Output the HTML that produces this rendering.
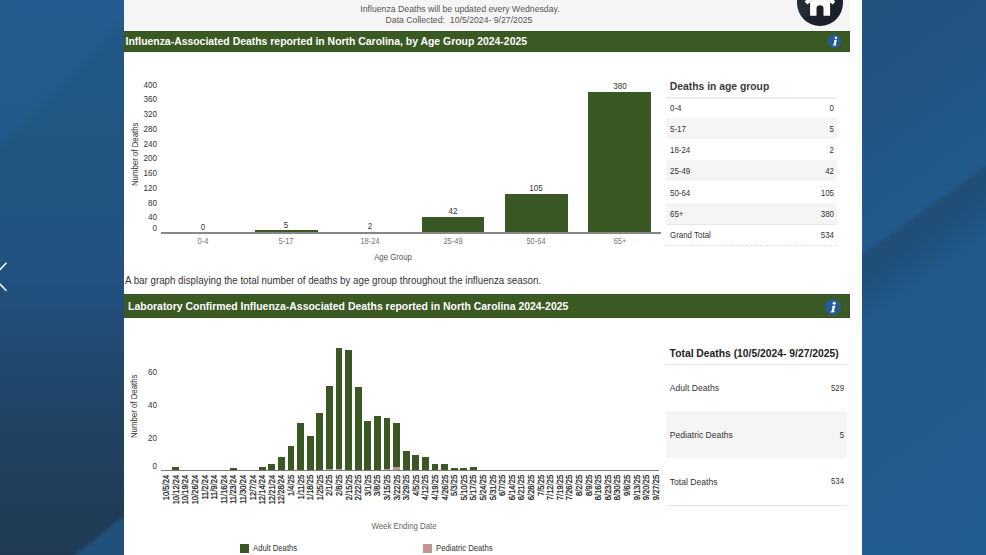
<!DOCTYPE html>
<html><head><meta charset="utf-8">
<style>
*{margin:0;padding:0;box-sizing:border-box}
html,body{width:986px;height:555px;overflow:hidden}
body{position:relative;font-family:"Liberation Sans", sans-serif;
background:#225380}
#bgl{position:absolute;left:0;top:0;width:124px;height:555px;background:linear-gradient(180deg,#22588a 0%,#21567f 25%,#225180 50%,#204466 73%,#203f5c 87%,#203a52 100%)}
#bgl2{position:absolute;left:0;top:0;width:124px;height:555px;background:linear-gradient(142deg,rgba(33,80,123,0) 93.6%,#21507b 94.6%),linear-gradient(134.5deg,rgba(40,100,160,0.25) 0%,rgba(40,100,160,0.3) 20%,rgba(40,100,160,0) 23%)}
#bgr{position:absolute;left:862px;top:0;width:124px;height:555px;background:linear-gradient(144.3deg,#21527d 0%,#225382 20%,#22578a 31%,#22598b 39%,#204e76 40.2%,#204f79 44%,#22598c 51%,#235c91 100%)}
.r{position:absolute}
.t{position:absolute;white-space:nowrap}
.dl{height:8.6px;text-align:right;font-size:8.6px;line-height:8.6px;color:#111;-webkit-text-stroke:0.25px #222;transform:rotate(-90deg) scaleX(0.88);transform-origin:center center}
</style></head><body>
<div id="bgl"></div><div id="bgl2"></div><div id="bgr"></div>
<div class="r" style="left:124.00px;top:0.00px;width:738.00px;height:555.00px;background:#fff;"></div>
<div class="r" style="left:124.00px;top:0.00px;width:726.00px;height:29.70px;background:#f5f5f5;"></div>
<div class="t" style="left:299.60px;top:5.35px;width:320px;text-align:center;font-size:9.1px;line-height:9.1px;color:#555;font-weight:normal;transform:scaleX(0.956);transform-origin:center center;">Influenza Deaths will be updated every Wednesday.</div>
<div class="t" style="left:299.40px;top:15.95px;width:320px;text-align:center;font-size:9.1px;line-height:9.1px;color:#555;font-weight:normal;transform:scaleX(0.956);transform-origin:center center;">Data Collected:&nbsp; 10/5/2024- 9/27/2025</div>
<div class="r" style="left:796.6px;top:-21.1px;width:46.8px;height:46.8px;border-radius:50%;background:linear-gradient(135deg,#272e3a 0%,#252b37 46%,#1b202a 54%,#1b202a 100%)"></div>
<svg class="r" style="left:796px;top:-10px" width="48" height="30" viewBox="0 0 48 30">
 <path d="M10 13 L24 1 L38 13" stroke="#fff" stroke-width="4.2" fill="none"/>
 <path d="M14.1 12 L24 4 L34.1 12 L34.1 25.8 L27.5 25.8 L27.5 18.6 Q27.5 15.3 24 15.3 Q20.5 15.3 20.5 18.6 L20.5 25.8 L14.1 25.8 Z" fill="#fff"/>
</svg>
<div class="r" style="left:124.00px;top:31.00px;width:726.00px;height:20.80px;background:#3a5923;box-sizing:border-box;border:1px solid #34531e;border-left:none"></div>
<div class="t" style="left:125.50px;top:36.89px;text-align:left;font-size:10.43px;line-height:10.43px;color:#fff;font-weight:bold;white-space:nowrap">Influenza-Associated Deaths reported in North Carolina, by Age Group 2024-2025</div>
<div class="r" style="left:827.60px;top:34.00px;width:13.8px;height:13.8px;border-radius:50%;background:#255c96"></div><svg class="r" style="left:827.60px;top:34.00px" width="13.8" height="13.8" viewBox="0 0 16 16"><circle cx="9.2" cy="4.3" r="1.45" fill="#fff"/><path d="M7.3 7.0 L10.4 6.6 L8.9 12.0 L9.6 12.0 L9.3 13.2 L5.4 13.4 L5.7 12.5 L6.4 12.4 L7.6 7.9 L7.0 8.0 Z" fill="#fff"/></svg>
<div class="t" style="left:183.14px;top:222.00px;width:40px;text-align:center;font-size:9.4px;line-height:9.4px;color:#333;font-weight:normal;transform:scaleX(0.86);transform-origin:center center;">0</div>
<div class="t" style="left:183.14px;top:236.70px;width:40px;text-align:center;font-size:8.6px;line-height:8.6px;color:#777;font-weight:normal;transform:scaleX(0.87);transform-origin:center center;">0-4</div>
<div class="r" style="left:255.08px;top:230.46px;width:62.70px;height:1.84px;background:#3a5823;"></div>
<div class="t" style="left:266.43px;top:220.15px;width:40px;text-align:center;font-size:9.4px;line-height:9.4px;color:#333;font-weight:normal;transform:scaleX(0.86);transform-origin:center center;">5</div>
<div class="t" style="left:266.43px;top:236.70px;width:40px;text-align:center;font-size:8.6px;line-height:8.6px;color:#777;font-weight:normal;transform:scaleX(0.87);transform-origin:center center;">5-17</div>
<div class="t" style="left:349.71px;top:221.26px;width:40px;text-align:center;font-size:9.4px;line-height:9.4px;color:#333;font-weight:normal;transform:scaleX(0.86);transform-origin:center center;">2</div>
<div class="t" style="left:349.71px;top:236.70px;width:40px;text-align:center;font-size:8.6px;line-height:8.6px;color:#777;font-weight:normal;transform:scaleX(0.87);transform-origin:center center;">18-24</div>
<div class="r" style="left:421.64px;top:216.83px;width:62.70px;height:15.47px;background:#3a5823;"></div>
<div class="t" style="left:432.99px;top:206.44px;width:40px;text-align:center;font-size:9.4px;line-height:9.4px;color:#333;font-weight:normal;transform:scaleX(0.86);transform-origin:center center;">42</div>
<div class="t" style="left:432.99px;top:236.70px;width:40px;text-align:center;font-size:8.6px;line-height:8.6px;color:#777;font-weight:normal;transform:scaleX(0.87);transform-origin:center center;">25-49</div>
<div class="r" style="left:504.93px;top:193.62px;width:62.70px;height:38.68px;background:#3a5823;"></div>
<div class="t" style="left:516.28px;top:183.09px;width:40px;text-align:center;font-size:9.4px;line-height:9.4px;color:#333;font-weight:normal;transform:scaleX(0.86);transform-origin:center center;">105</div>
<div class="t" style="left:516.28px;top:236.70px;width:40px;text-align:center;font-size:8.6px;line-height:8.6px;color:#777;font-weight:normal;transform:scaleX(0.87);transform-origin:center center;">50-64</div>
<div class="r" style="left:588.21px;top:92.30px;width:62.70px;height:140.00px;background:#3a5823;"></div>
<div class="t" style="left:599.56px;top:81.20px;width:40px;text-align:center;font-size:9.4px;line-height:9.4px;color:#333;font-weight:normal;transform:scaleX(0.86);transform-origin:center center;">380</div>
<div class="t" style="left:599.56px;top:236.70px;width:40px;text-align:center;font-size:8.6px;line-height:8.6px;color:#777;font-weight:normal;transform:scaleX(0.87);transform-origin:center center;">65+</div>
<div class="r" style="left:161.30px;top:232.30px;width:499.70px;height:1.70px;background:#888;"></div>
<div class="t" style="left:117.30px;top:79.50px;width:40px;text-align:right;font-size:9.4px;line-height:9.4px;color:#333;font-weight:normal;transform:scaleX(0.86);transform-origin:right center;">400</div>
<div class="t" style="left:117.30px;top:94.26px;width:40px;text-align:right;font-size:9.4px;line-height:9.4px;color:#333;font-weight:normal;transform:scaleX(0.86);transform-origin:right center;">360</div>
<div class="t" style="left:117.30px;top:109.02px;width:40px;text-align:right;font-size:9.4px;line-height:9.4px;color:#333;font-weight:normal;transform:scaleX(0.86);transform-origin:right center;">320</div>
<div class="t" style="left:117.30px;top:123.78px;width:40px;text-align:right;font-size:9.4px;line-height:9.4px;color:#333;font-weight:normal;transform:scaleX(0.86);transform-origin:right center;">280</div>
<div class="t" style="left:117.30px;top:138.54px;width:40px;text-align:right;font-size:9.4px;line-height:9.4px;color:#333;font-weight:normal;transform:scaleX(0.86);transform-origin:right center;">240</div>
<div class="t" style="left:117.30px;top:153.30px;width:40px;text-align:right;font-size:9.4px;line-height:9.4px;color:#333;font-weight:normal;transform:scaleX(0.86);transform-origin:right center;">200</div>
<div class="t" style="left:117.30px;top:168.06px;width:40px;text-align:right;font-size:9.4px;line-height:9.4px;color:#333;font-weight:normal;transform:scaleX(0.86);transform-origin:right center;">160</div>
<div class="t" style="left:117.30px;top:182.82px;width:40px;text-align:right;font-size:9.4px;line-height:9.4px;color:#333;font-weight:normal;transform:scaleX(0.86);transform-origin:right center;">120</div>
<div class="t" style="left:117.30px;top:197.58px;width:40px;text-align:right;font-size:9.4px;line-height:9.4px;color:#333;font-weight:normal;transform:scaleX(0.86);transform-origin:right center;">80</div>
<div class="t" style="left:117.30px;top:212.34px;width:40px;text-align:right;font-size:9.4px;line-height:9.4px;color:#333;font-weight:normal;transform:scaleX(0.86);transform-origin:right center;">40</div>
<div class="t" style="left:117.30px;top:222.90px;width:40px;text-align:right;font-size:9.4px;line-height:9.4px;color:#333;font-weight:normal;transform:scaleX(0.86);transform-origin:right center;">0</div>
<div class="t" style="left:84.50px;top:149.50px;width:100px;text-align:center;font-size:8.6px;line-height:8.6px;color:#333;font-weight:normal;transform:rotate(-90deg) scaleX(0.91);transform-origin:center center;">Number of Deaths</div>
<div class="t" style="left:353.30px;top:253.90px;width:80px;text-align:center;font-size:8.2px;line-height:8.2px;color:#555;font-weight:normal;transform:scaleX(0.95);transform-origin:center center;">Age Group</div>
<div class="t" style="left:669.80px;top:81.73px;text-align:left;font-size:10.35px;line-height:10.35px;color:#3a3a3a;font-weight:bold;white-space:nowrap">Deaths in age group</div>
<div class="r" style="left:666.30px;top:97.20px;width:170.70px;height:2.00px;background:#ececec;"></div>
<div class="t" style="left:670.30px;top:103.55px;text-align:left;font-size:9.0px;line-height:9.0px;color:#333;font-weight:normal;transform:scaleX(0.88);transform-origin:left center;white-space:nowrap">0-4</div>
<div class="t" style="left:774.10px;top:103.55px;width:60px;text-align:right;font-size:9.0px;line-height:9.0px;color:#333;font-weight:normal;transform:scaleX(0.88);transform-origin:right center;">0</div>
<div class="r" style="left:666.30px;top:117.90px;width:170.70px;height:21.20px;background:#f5f5f5;"></div>
<div class="t" style="left:670.30px;top:125.00px;text-align:left;font-size:9.0px;line-height:9.0px;color:#333;font-weight:normal;transform:scaleX(0.88);transform-origin:left center;white-space:nowrap">5-17</div>
<div class="t" style="left:774.10px;top:125.00px;width:60px;text-align:right;font-size:9.0px;line-height:9.0px;color:#333;font-weight:normal;transform:scaleX(0.88);transform-origin:right center;">5</div>
<div class="t" style="left:670.30px;top:146.20px;text-align:left;font-size:9.0px;line-height:9.0px;color:#333;font-weight:normal;transform:scaleX(0.88);transform-origin:left center;white-space:nowrap">18-24</div>
<div class="t" style="left:774.10px;top:146.20px;width:60px;text-align:right;font-size:9.0px;line-height:9.0px;color:#333;font-weight:normal;transform:scaleX(0.88);transform-origin:right center;">2</div>
<div class="r" style="left:666.30px;top:160.30px;width:170.70px;height:21.20px;background:#f5f5f5;"></div>
<div class="t" style="left:670.30px;top:167.40px;text-align:left;font-size:9.0px;line-height:9.0px;color:#333;font-weight:normal;transform:scaleX(0.88);transform-origin:left center;white-space:nowrap">25-49</div>
<div class="t" style="left:774.10px;top:167.40px;width:60px;text-align:right;font-size:9.0px;line-height:9.0px;color:#333;font-weight:normal;transform:scaleX(0.88);transform-origin:right center;">42</div>
<div class="t" style="left:670.30px;top:188.55px;text-align:left;font-size:9.0px;line-height:9.0px;color:#333;font-weight:normal;transform:scaleX(0.88);transform-origin:left center;white-space:nowrap">50-64</div>
<div class="t" style="left:774.10px;top:188.55px;width:60px;text-align:right;font-size:9.0px;line-height:9.0px;color:#333;font-weight:normal;transform:scaleX(0.88);transform-origin:right center;">105</div>
<div class="r" style="left:666.30px;top:202.60px;width:170.70px;height:22.10px;background:#f5f5f5;"></div>
<div class="t" style="left:670.30px;top:210.15px;text-align:left;font-size:9.0px;line-height:9.0px;color:#333;font-weight:normal;transform:scaleX(0.88);transform-origin:left center;white-space:nowrap">65+</div>
<div class="t" style="left:774.10px;top:210.15px;width:60px;text-align:right;font-size:9.0px;line-height:9.0px;color:#333;font-weight:normal;transform:scaleX(0.88);transform-origin:right center;">380</div>
<div class="t" style="left:670.30px;top:231.45px;text-align:left;font-size:9.0px;line-height:9.0px;color:#333;font-weight:normal;transform:scaleX(0.88);transform-origin:left center;white-space:nowrap">Grand Total</div>
<div class="t" style="left:774.10px;top:231.45px;width:60px;text-align:right;font-size:9.0px;line-height:9.0px;color:#333;font-weight:normal;transform:scaleX(0.88);transform-origin:right center;">534</div>
<div class="r" style="left:666.30px;top:224.20px;width:170.70px;height:1.00px;background:#e6e6e6;"></div>
<div class="r" style="left:666.3px;top:244.7px;width:170.7px;height:0;border-top:1px dashed #e2e2e2"></div>
<div class="t" style="left:125.40px;top:275.80px;text-align:left;font-size:10.4px;line-height:10.4px;color:#333;font-weight:normal;transform:scaleX(0.938);transform-origin:left center;white-space:nowrap">A bar graph displaying the total number of deaths by age group throughout the influenza season.</div>
<div class="r" style="left:124.00px;top:294.40px;width:726.00px;height:23.70px;background:#3a5923;box-sizing:border-box;border:1px solid #34531e;border-left:none"></div>
<div class="t" style="left:128.10px;top:301.97px;text-align:left;font-size:10.45px;line-height:10.45px;color:#fff;font-weight:bold;white-space:nowrap">Laboratory Confirmed Influenza-Associated Deaths reported in North Carolina 2024-2025</div>
<div class="r" style="left:824.90px;top:298.70px;width:16px;height:16px;border-radius:50%;background:#255c96"></div><svg class="r" style="left:824.90px;top:298.70px" width="16" height="16" viewBox="0 0 16 16"><circle cx="9.2" cy="4.3" r="1.45" fill="#fff"/><path d="M7.3 7.0 L10.4 6.6 L8.9 12.0 L9.6 12.0 L9.3 13.2 L5.4 13.4 L5.7 12.5 L6.4 12.4 L7.6 7.9 L7.0 8.0 Z" fill="#fff"/></svg>
<div class="t dl" style="left:136.20px;top:496.70px;width:60px">10/5/24</div>
<div class="r" style="left:172.40px;top:466.75px;width:6.80px;height:3.25px;background:#3a5823;"></div>
<div class="t dl" style="left:145.80px;top:496.70px;width:60px">10/12/24</div>
<div class="t dl" style="left:155.40px;top:496.70px;width:60px">10/19/24</div>
<div class="t dl" style="left:165.00px;top:496.70px;width:60px">10/26/24</div>
<div class="t dl" style="left:174.60px;top:496.70px;width:60px">11/2/24</div>
<div class="t dl" style="left:184.20px;top:496.70px;width:60px">11/9/24</div>
<div class="t dl" style="left:193.80px;top:496.70px;width:60px">11/16/24</div>
<div class="r" style="left:230.00px;top:468.38px;width:6.80px;height:1.62px;background:#3a5823;"></div>
<div class="t dl" style="left:203.40px;top:496.70px;width:60px">11/23/24</div>
<div class="t dl" style="left:213.00px;top:496.70px;width:60px">11/30/24</div>
<div class="t dl" style="left:222.60px;top:496.70px;width:60px">12/7/24</div>
<div class="r" style="left:258.80px;top:466.75px;width:6.80px;height:3.25px;background:#3a5823;"></div>
<div class="t dl" style="left:232.20px;top:496.70px;width:60px">12/14/24</div>
<div class="r" style="left:268.40px;top:463.50px;width:6.80px;height:6.50px;background:#3a5823;"></div>
<div class="t dl" style="left:241.80px;top:496.70px;width:60px">12/21/24</div>
<div class="r" style="left:278.00px;top:457.00px;width:6.80px;height:13.00px;background:#3a5823;"></div>
<div class="t dl" style="left:251.40px;top:496.70px;width:60px">12/28/24</div>
<div class="r" style="left:287.60px;top:445.62px;width:6.80px;height:24.38px;background:#3a5823;"></div>
<div class="t dl" style="left:261.00px;top:496.70px;width:60px">1/4/25</div>
<div class="r" style="left:297.20px;top:422.88px;width:6.80px;height:47.12px;background:#3a5823;"></div>
<div class="t dl" style="left:270.60px;top:496.70px;width:60px">1/11/25</div>
<div class="r" style="left:306.80px;top:435.88px;width:6.80px;height:34.12px;background:#3a5823;"></div>
<div class="t dl" style="left:280.20px;top:496.70px;width:60px">1/18/25</div>
<div class="r" style="left:316.40px;top:413.12px;width:6.80px;height:56.88px;background:#3a5823;"></div>
<div class="t dl" style="left:289.80px;top:496.70px;width:60px">1/25/25</div>
<div class="r" style="left:326.00px;top:385.50px;width:6.80px;height:84.50px;background:#3a5823;"></div>
<div class="r" style="left:326.00px;top:468.50px;width:6.80px;height:1.50px;background:#c49494;"></div>
<div class="t dl" style="left:299.40px;top:496.70px;width:60px">2/1/25</div>
<div class="r" style="left:335.60px;top:348.12px;width:6.80px;height:121.88px;background:#3a5823;"></div>
<div class="r" style="left:335.60px;top:468.50px;width:6.80px;height:1.50px;background:#c49494;"></div>
<div class="t dl" style="left:309.00px;top:496.70px;width:60px">2/8/25</div>
<div class="r" style="left:345.20px;top:349.75px;width:6.80px;height:120.25px;background:#3a5823;"></div>
<div class="t dl" style="left:318.60px;top:496.70px;width:60px">2/15/25</div>
<div class="r" style="left:354.80px;top:387.12px;width:6.80px;height:82.88px;background:#3a5823;"></div>
<div class="t dl" style="left:328.20px;top:496.70px;width:60px">2/22/25</div>
<div class="r" style="left:364.40px;top:421.25px;width:6.80px;height:48.75px;background:#3a5823;"></div>
<div class="t dl" style="left:337.80px;top:496.70px;width:60px">3/1/25</div>
<div class="r" style="left:374.00px;top:416.38px;width:6.80px;height:53.62px;background:#3a5823;"></div>
<div class="t dl" style="left:347.40px;top:496.70px;width:60px">3/8/25</div>
<div class="r" style="left:383.60px;top:418.00px;width:6.80px;height:52.00px;background:#3a5823;"></div>
<div class="r" style="left:383.60px;top:468.50px;width:6.80px;height:1.50px;background:#c49494;"></div>
<div class="t dl" style="left:357.00px;top:496.70px;width:60px">3/15/25</div>
<div class="r" style="left:393.20px;top:422.88px;width:6.80px;height:47.12px;background:#3a5823;"></div>
<div class="r" style="left:393.20px;top:467.00px;width:6.80px;height:3.00px;background:#c49494;"></div>
<div class="t dl" style="left:366.60px;top:496.70px;width:60px">3/22/25</div>
<div class="r" style="left:402.80px;top:450.50px;width:6.80px;height:19.50px;background:#3a5823;"></div>
<div class="t dl" style="left:376.20px;top:496.70px;width:60px">3/29/25</div>
<div class="r" style="left:412.40px;top:455.38px;width:6.80px;height:14.62px;background:#3a5823;"></div>
<div class="t dl" style="left:385.80px;top:496.70px;width:60px">4/5/25</div>
<div class="r" style="left:422.00px;top:457.00px;width:6.80px;height:13.00px;background:#3a5823;"></div>
<div class="t dl" style="left:395.40px;top:496.70px;width:60px">4/12/25</div>
<div class="r" style="left:431.60px;top:463.50px;width:6.80px;height:6.50px;background:#3a5823;"></div>
<div class="t dl" style="left:405.00px;top:496.70px;width:60px">4/19/25</div>
<div class="r" style="left:441.20px;top:463.50px;width:6.80px;height:6.50px;background:#3a5823;"></div>
<div class="t dl" style="left:414.60px;top:496.70px;width:60px">4/26/25</div>
<div class="r" style="left:450.80px;top:468.38px;width:6.80px;height:1.62px;background:#3a5823;"></div>
<div class="t dl" style="left:424.20px;top:496.70px;width:60px">5/3/25</div>
<div class="r" style="left:460.40px;top:468.38px;width:6.80px;height:1.62px;background:#3a5823;"></div>
<div class="t dl" style="left:433.80px;top:496.70px;width:60px">5/10/25</div>
<div class="r" style="left:470.00px;top:466.75px;width:6.80px;height:3.25px;background:#3a5823;"></div>
<div class="t dl" style="left:443.40px;top:496.70px;width:60px">5/17/25</div>
<div class="t dl" style="left:453.00px;top:496.70px;width:60px">5/24/25</div>
<div class="t dl" style="left:462.60px;top:496.70px;width:60px">5/31/25</div>
<div class="t dl" style="left:472.20px;top:496.70px;width:60px">6/7/25</div>
<div class="t dl" style="left:481.80px;top:496.70px;width:60px">6/14/25</div>
<div class="t dl" style="left:491.40px;top:496.70px;width:60px">6/21/25</div>
<div class="t dl" style="left:501.00px;top:496.70px;width:60px">6/28/25</div>
<div class="t dl" style="left:510.60px;top:496.70px;width:60px">7/5/25</div>
<div class="t dl" style="left:520.20px;top:496.70px;width:60px">7/12/25</div>
<div class="t dl" style="left:529.80px;top:496.70px;width:60px">7/19/25</div>
<div class="t dl" style="left:539.40px;top:496.70px;width:60px">7/26/25</div>
<div class="t dl" style="left:549.00px;top:496.70px;width:60px">8/2/25</div>
<div class="t dl" style="left:558.60px;top:496.70px;width:60px">8/9/25</div>
<div class="t dl" style="left:568.20px;top:496.70px;width:60px">8/16/25</div>
<div class="t dl" style="left:577.80px;top:496.70px;width:60px">8/23/25</div>
<div class="t dl" style="left:587.40px;top:496.70px;width:60px">8/30/25</div>
<div class="t dl" style="left:597.00px;top:496.70px;width:60px">9/6/25</div>
<div class="t dl" style="left:606.60px;top:496.70px;width:60px">9/13/25</div>
<div class="t dl" style="left:616.20px;top:496.70px;width:60px">9/20/25</div>
<div class="t dl" style="left:625.80px;top:496.70px;width:60px">9/27/25</div>
<div class="r" style="left:161.30px;top:469.90px;width:498.20px;height:1.50px;background:#7a7a7a;"></div>
<div class="t" style="left:117.30px;top:367.20px;width:40px;text-align:right;font-size:9.4px;line-height:9.4px;color:#333;font-weight:normal;transform:scaleX(0.86);transform-origin:right center;">60</div>
<div class="t" style="left:117.30px;top:399.80px;width:40px;text-align:right;font-size:9.4px;line-height:9.4px;color:#333;font-weight:normal;transform:scaleX(0.86);transform-origin:right center;">40</div>
<div class="t" style="left:117.30px;top:433.00px;width:40px;text-align:right;font-size:9.4px;line-height:9.4px;color:#333;font-weight:normal;transform:scaleX(0.86);transform-origin:right center;">20</div>
<div class="t" style="left:117.30px;top:461.30px;width:40px;text-align:right;font-size:9.4px;line-height:9.4px;color:#333;font-weight:normal;transform:scaleX(0.86);transform-origin:right center;">0</div>
<div class="t" style="left:84.10px;top:402.10px;width:100px;text-align:center;font-size:8.6px;line-height:8.6px;color:#333;font-weight:normal;transform:rotate(-90deg) scaleX(0.91);transform-origin:center center;">Number of Deaths</div>
<div class="t" style="left:344.10px;top:522.15px;width:120px;text-align:center;font-size:8.5px;line-height:8.5px;color:#666;font-weight:normal;transform:scaleX(0.92);transform-origin:center center;">Week Ending Date</div>
<div class="r" style="left:240.00px;top:544.00px;width:9.00px;height:8.80px;background:#3a5823;"></div>
<div class="t" style="left:252.80px;top:544.40px;text-align:left;font-size:8.4px;line-height:8.4px;color:#333;font-weight:normal;transform:scaleX(0.922);transform-origin:left center;white-space:nowrap">Adult Deaths</div>
<div class="r" style="left:423.00px;top:543.90px;width:9.00px;height:9.10px;background:#c49494;"></div>
<div class="t" style="left:435.70px;top:544.40px;text-align:left;font-size:8.4px;line-height:8.4px;color:#333;font-weight:normal;transform:scaleX(0.922);transform-origin:left center;white-space:nowrap">Pediatric Deaths</div>
<div class="t" style="left:669.60px;top:348.73px;text-align:left;font-size:10.34px;line-height:10.34px;color:#222;font-weight:bold;white-space:nowrap">Total Deaths (10/5/2024- 9/27/2025)</div>
<div class="r" style="left:666.00px;top:364.10px;width:181.00px;height:1.00px;background:#e6e6e6;"></div>
<div class="r" style="left:666.00px;top:410.80px;width:181.00px;height:47.20px;background:#f5f5f5;"></div>
<div class="t" style="left:669.80px;top:383.70px;text-align:left;font-size:8.6px;line-height:8.6px;color:#333;font-weight:normal;white-space:nowrap">Adult Deaths</div>
<div class="t" style="left:783.90px;top:383.55px;width:60px;text-align:right;font-size:8.9px;line-height:8.9px;color:#333;font-weight:normal;transform:scaleX(0.88);transform-origin:right center;">529</div>
<div class="t" style="left:669.80px;top:430.70px;text-align:left;font-size:8.6px;line-height:8.6px;color:#333;font-weight:normal;white-space:nowrap">Pediatric Deaths</div>
<div class="t" style="left:783.90px;top:430.55px;width:60px;text-align:right;font-size:8.9px;line-height:8.9px;color:#333;font-weight:normal;transform:scaleX(0.88);transform-origin:right center;">5</div>
<div class="t" style="left:669.80px;top:477.50px;text-align:left;font-size:8.6px;line-height:8.6px;color:#333;font-weight:normal;white-space:nowrap">Total Deaths</div>
<div class="t" style="left:783.90px;top:477.35px;width:60px;text-align:right;font-size:8.9px;line-height:8.9px;color:#333;font-weight:normal;transform:scaleX(0.88);transform-origin:right center;">534</div>
<div class="r" style="left:666.00px;top:505.10px;width:181.00px;height:1.00px;background:#e6e6e6;"></div>
<svg class="r" style="left:0;top:260px" width="12" height="34" viewBox="0 0 12 34"><path d="M6.5 2.8 L-7 17 L6.5 30.8" stroke="#fff" stroke-width="1.5" fill="none"/></svg>
</body></html>
